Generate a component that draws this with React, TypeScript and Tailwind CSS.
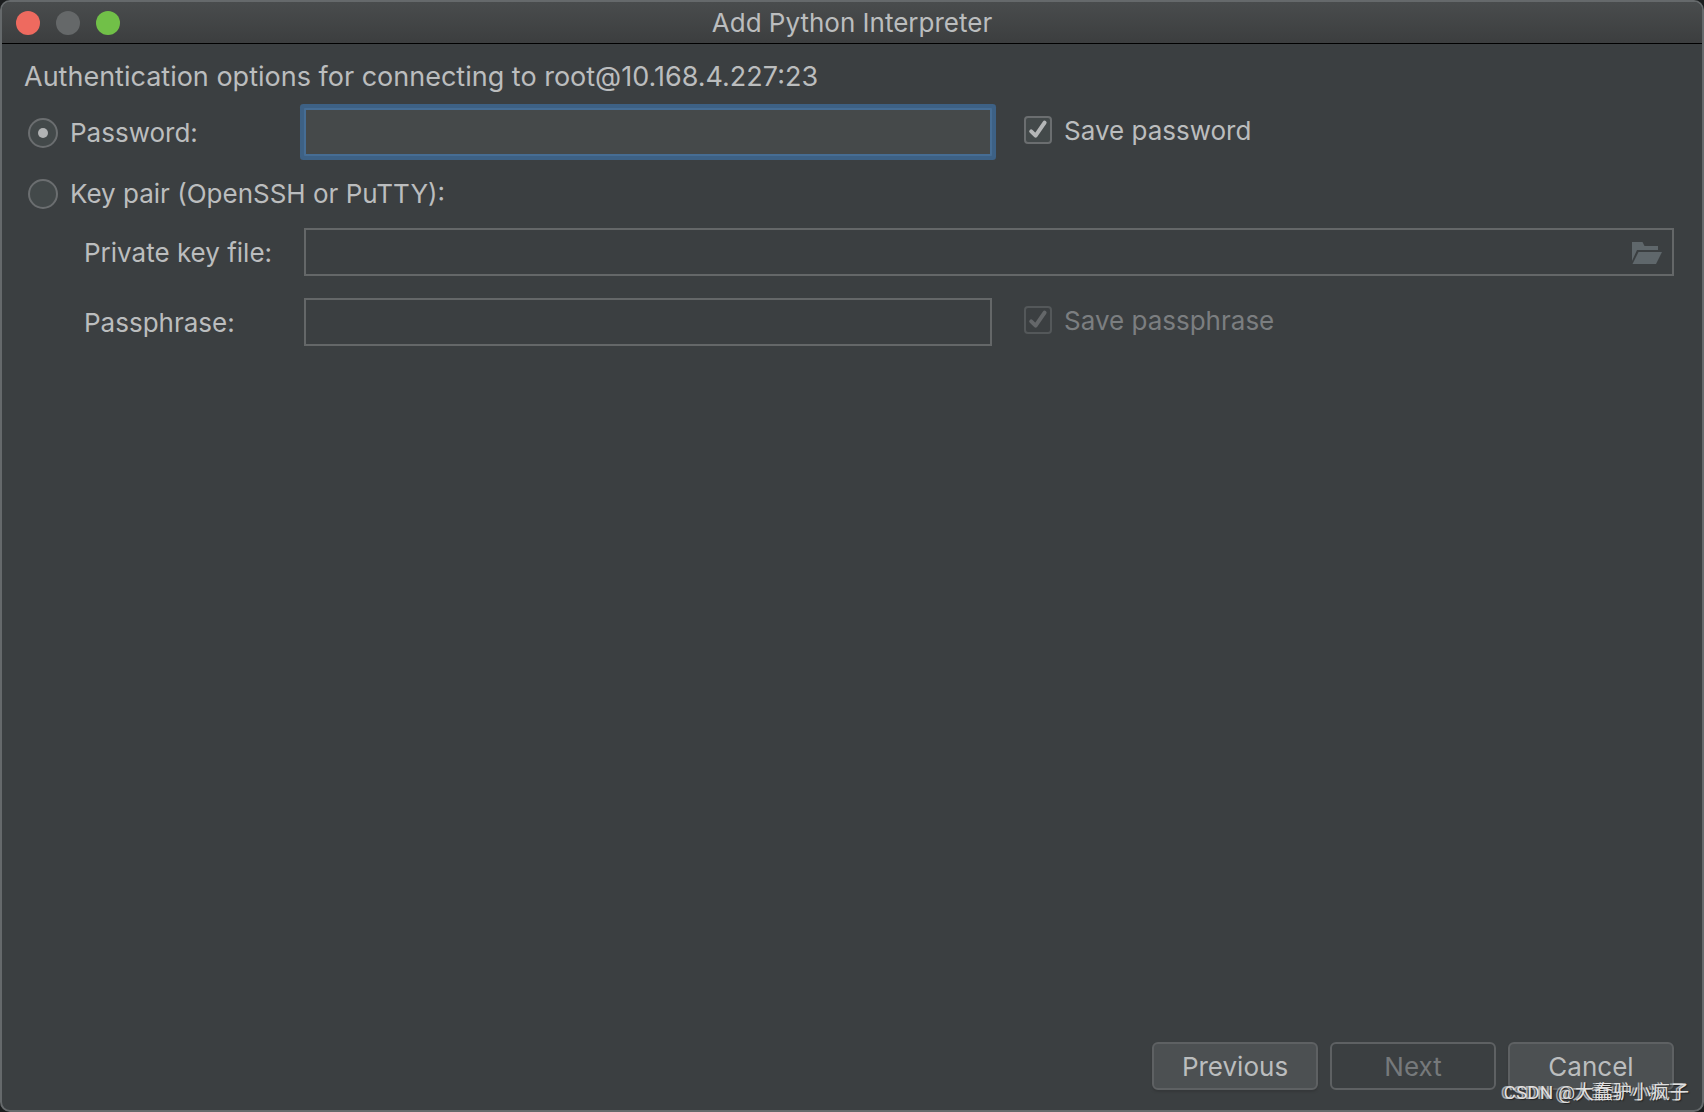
import { useState } from 'react';
import type { InputHTMLAttributes, ReactNode } from 'react';
import clsx from 'clsx';

type AuthType = 'password' | 'keyPair';

interface RadioProps {
  label: string;
  checked: boolean;
  onChange: () => void;
}

function Radio({ label, checked, onChange }: RadioProps) {
  return (
    <label className="flex items-center gap-3 pt-0.5">
      <span className="relative flex size-[30px] items-center justify-center">
        <input
          type="radio"
          name="authType"
          checked={checked}
          onChange={onChange}
          className="size-[30px] appearance-none rounded-full border-2 border-[#6b6e70] bg-[#43494a] outline-none"
        />
        {checked && (
          <span className="pointer-events-none absolute size-[10px] rounded-full bg-[#b1b3b4]" />
        )}
      </span>
      {label}
    </label>
  );
}

interface CheckBoxProps {
  label: string;
  disabled?: boolean;
}

function CheckBox({ label, disabled = false }: CheckBoxProps) {
  const [checked, setChecked] = useState(true);

  return (
    <label
      className={clsx(
        'flex items-center gap-3 pb-1',
        disabled && 'text-[#7b7e80]',
      )}
    >
      <span className="relative flex size-7">
        <input
          type="checkbox"
          checked={checked}
          disabled={disabled}
          onChange={(e) => setChecked(e.target.checked)}
          className={clsx(
            'size-7 appearance-none rounded border-2 outline-none',
            disabled ? 'border-[#54585a]' : 'border-[#6b6e70] bg-[#43494a]',
          )}
        />
        {checked && (
          <svg
            viewBox="0 0 28 28"
            fill="none"
            stroke={disabled ? '#646769' : '#b4b6b7'}
            strokeWidth="4"
            className="pointer-events-none absolute inset-0 size-7"
          >
            <path d="M7.2 15.4 11.6 19.6 20.6 6.6" strokeLinecap="round" strokeLinejoin="round" />
          </svg>
        )}
      </span>
      <span className="pt-0.5">{label}</span>
    </label>
  );
}

function TextField(props: InputHTMLAttributes<HTMLInputElement>) {
  return (
    <input
      {...props}
      className="h-12 w-full min-w-0 border-2 border-[#646768] bg-transparent px-3 outline-none"
    />
  );
}

interface ButtonProps {
  children: ReactNode;
  disabled?: boolean;
}

function Button({ children, disabled = false }: ButtonProps) {
  return (
    <button
      type="button"
      disabled={disabled}
      className={clsx(
        'h-12 w-[166px] rounded-md border-2 border-[#5e6163] pt-0.5',
        disabled ? 'text-[#76797b]' : 'bg-[#4c5052] shadow-[0_2px_2px_#35383a]',
      )}
    >
      {children}
    </button>
  );
}

function FolderIcon() {
  return (
    <svg viewBox="0 0 30 22" className="h-[22px] w-[30px]" fill="#5f676b">
      <path d="M0 0h10.5l2 4H26v4H5L0 19z" />
      <path d="M6.5 10H30l-6 12H.5z" />
    </svg>
  );
}

export default function App() {
  const [authType, setAuthType] = useState<AuthType>('password');

  return (
    <div className="min-h-screen bg-[#1b1d1e] font-['Inter','Noto_Sans',sans-serif] text-[26px] leading-8 text-[#bbbdbe]">
      <div className="relative flex min-h-screen flex-col rounded-[10px] border-2 border-[#65696b] bg-[#3b3f41]">
        <header className="grid h-[42px] grid-cols-3 items-center rounded-t-lg border-b border-black bg-linear-to-b from-[#494c4d] to-[#3c3e3f] px-[14px]">
          <div className="flex gap-4">
            <button type="button" aria-label="Close" className="size-6 rounded-full bg-[#ee6a5f]" />
            <button type="button" aria-label="Minimize" className="size-6 rounded-full bg-[#656869]" />
            <button type="button" aria-label="Zoom" className="size-6 rounded-full bg-[#71c048]" />
          </div>
          <h1 className="text-center whitespace-nowrap">Add Python Interpreter</h1>
        </header>

        <main className="flex grow flex-col px-[26px] pt-[17px]">
          <p className="-ml-1 text-[27px]">
            Authentication options for connecting to root@10.168.4.227:23
          </p>

          <div className="mt-[15px] grid grid-cols-[276px_688px_1fr] items-center">
            <Radio
              label="Password:"
              checked={authType === 'password'}
              onChange={() => setAuthType('password')}
            />
            <input
              type="password"
              aria-label="Password"
              className="h-12 rounded-[1px] border-2 border-[#466d94] bg-[#45494a] px-3 ring-4 ring-[#3d6185] outline-none"
            />
            <div className="pl-8">
              <CheckBox label="Save password" />
            </div>
          </div>

          <div className="mt-5 flex">
            <Radio
              label="Key pair (OpenSSH or PuTTY):"
              checked={authType === 'keyPair'}
              onChange={() => setAuthType('keyPair')}
            />
          </div>

          <div className="mt-[18px] grid grid-cols-[220px_688px_1fr] items-center gap-y-[22px] pr-0.5 pl-14">
            <label htmlFor="keyFile" className="pt-0.5">
              Private key file:
            </label>
            <div className="relative col-span-2 flex items-center">
              <TextField id="keyFile" disabled />
              <button type="button" aria-label="Browse" disabled className="absolute right-3 pt-0.5">
                <FolderIcon />
              </button>
            </div>
            <label htmlFor="passphrase" className="pt-0.5">
              Passphrase:
            </label>
            <TextField id="passphrase" type="password" disabled />
            <div className="pl-8">
              <CheckBox label="Save passphrase" disabled />
            </div>
          </div>
        </main>

        <footer className="flex justify-end gap-3 px-7 pb-5">
          <Button>Previous</Button>
          <Button disabled>Next</Button>
          <Button>Cancel</Button>
        </footer>

        <span className="absolute right-[13px] bottom-[3px] font-['Roboto','Noto_Sans_CJK_SC',sans-serif] text-[19px] leading-7 text-[#e0e0e0] [text-shadow:-3px_0_0_#a8aaab,1px_1px_1px_#222]">
          CSDN @大蠢驴小疯子
        </span>
      </div>
    </div>
  );
}
